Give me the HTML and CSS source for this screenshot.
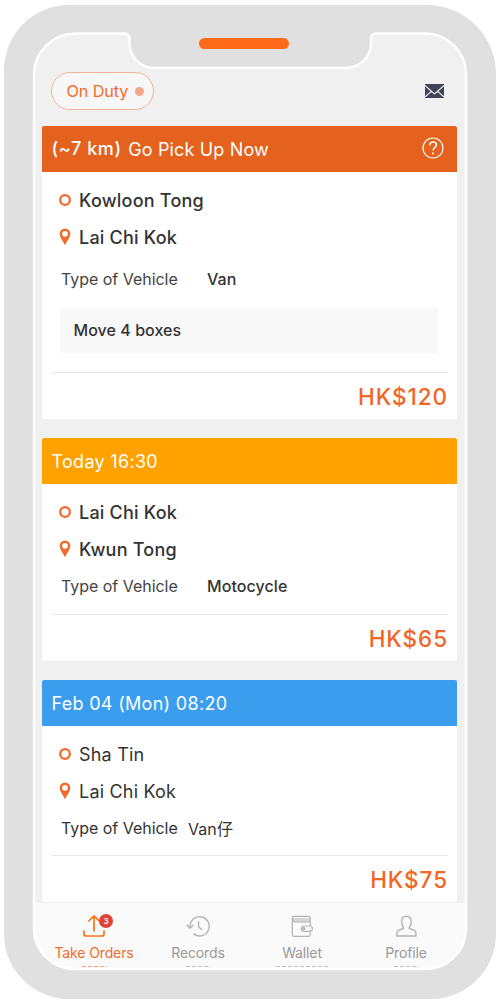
FILE: index.html
```html
<!DOCTYPE html>
<html lang="en">
<head>
<meta charset="utf-8">
<title>Take Orders</title>
<link rel="stylesheet" href="styles.css">
</head>
<body>
<svg class="defs" aria-hidden="true">
  <symbol id="circle" viewBox="0 0 12 12"><circle cx="6" cy="6" r="4.800" fill="none" stroke="#f4692a" stroke-width="2.300"/></symbol>
  <symbol id="pin" viewBox="0 0 12 18"><path fill="#f4692a" fill-rule="evenodd" d="M6 .5A5.300 5.300 0 0 0 .7 5.800C.7 9 3.500 12.500 6 17.200 8.500 12.500 11.300 9 11.300 5.800A5.300 5.300 0 0 0 6 .5ZM6 2.900a2.900 2.900 0 1 1 0 5.800a2.900 2.900 0 1 1 0-5.800Z"/></symbol>
</svg>
<div class="phone">
  <div class="screen">
    <header class="topbar">
      <div class="duty"><span class="duty-label">On Duty</span><span class="duty-dot"></span></div>
      <svg class="mail" viewBox="0 0 19 14"><rect width="19" height="14" fill="#424257"/><path d="M0 1.500 7.200 8 9.500 9.900 11.800 8 19 1.500M0 13 6.200 7.300M19 13 12.800 7.300" fill="none" stroke="#f0f0f0" stroke-width="1.100"/></svg>
    </header>
    <main class="orders">
      <article class="card">
        <div class="head red"><span class="dist">(~7 km)</span><span class="pickup">Go Pick Up Now</span>
          <svg class="help" viewBox="0 0 22 22" fill="none" stroke="#fff"><circle cx="11" cy="11" r="10" stroke-width="1.200"/><path d="M7.700 8.300C7.800 6.200 9.200 5.100 11.100 5.100S14.400 6.300 14.400 8.100C14.400 10.400 11.100 10.500 11.100 13.500" stroke-width="1.500"/><path d="M11.100 15.400v1.800" stroke-width="1.800"/></svg>
        </div>
        <div class="row"><svg class="i-circle"><use href="#circle"/></svg><span class="place">Kowloon Tong</span></div>
        <div class="row"><svg class="i-pin"><use href="#pin"/></svg><span class="place">Lai Chi Kok</span></div>
        <div class="type spaced"><span class="type-label">Type of Vehicle</span><span class="type-value">Van</span></div>
        <div class="note">Move 4 boxes</div>
        <div class="foot">HK$120</div>
      </article>
      <article class="card">
        <div class="head amber"><span class="today">Today 16:30</span></div>
        <div class="row"><svg class="i-circle"><use href="#circle"/></svg><span class="place">Lai Chi Kok</span></div>
        <div class="row"><svg class="i-pin"><use href="#pin"/></svg><span class="place">Kwun Tong</span></div>
        <div class="type"><span class="type-label">Type of Vehicle</span><span class="type-value">Motocycle</span></div>
        <div class="foot">HK$65</div>
      </article>
      <article class="card light">
        <div class="head blue"><span class="date">Feb 04 (Mon) 08:20</span></div>
        <div class="row"><svg class="i-circle"><use href="#circle"/></svg><span class="place">Sha Tin</span></div>
        <div class="row"><svg class="i-pin"><use href="#pin"/></svg><span class="place">Lai Chi Kok</span></div>
        <div class="type"><span class="type-label">Type of Vehicle</span><span class="type-value">Van仔</span></div>
        <div class="foot">HK$75</div>
      </article>
    </main>
    <nav class="tabs">
      <div class="tab active">
        <div class="icon">
          <svg viewBox="0 0 24 24" fill="none" stroke="#fb7315" stroke-width="1.700" stroke-linecap="round" stroke-linejoin="round"><path d="M12 17V1.800M6.800 7 12 1.800l5.200 5.200M2 17v3a2 2 0 0 0 2 2h16a2 2 0 0 0 2-2V17"/></svg>
          <span class="badge">3</span>
        </div>
        <span class="label">Take Orders</span><i class="edge"></i>
      </div>
      <div class="tab">
        <div class="icon">
          <svg viewBox="0 0 24 24" fill="none" stroke="#b3b3b3" stroke-width="1.400" stroke-linecap="round" stroke-linejoin="round"><path d="M4 13.800V12A9.600 9.600 0 1 1 8 20.100M1 11.300l3 2.900 3-2.900M12.600 7.800v5l3 2.800"/></svg>
        </div>
        <span class="label">Records</span><i class="edge"></i>
      </div>
      <div class="tab">
        <div class="icon">
          <svg viewBox="0 0 24 24" fill="none" stroke="#b3b3b3" stroke-width="1.200" stroke-linejoin="round"><path d="M3 4h17v4H3z" fill="#d6d6d6" stroke="none"/><path d="M20.300 12V4.500Q20.300 2.300 18.500 2.300H4Q2.300 2.300 2.300 4V20.500Q2.300 22.300 4 22.300H18.500Q20.300 22.300 20.300 20.500V17.500M2.500 5Q2.600 8 5 8H20.300M20.500 12H14a2.700 2.700 0 0 0 0 5.400h6Q22.500 16.500 22.500 14.700T20.500 12Z"/><circle cx="13.700" cy="14.700" r="1"/></svg>
        </div>
        <span class="label">Wallet</span><i class="edge wide"></i>
      </div>
      <div class="tab">
        <div class="icon">
          <svg viewBox="0 0 24 24" fill="none" stroke="#b3b3b3" stroke-width="1.400" stroke-linejoin="round"><path d="M9.400 13.200C8 11.500 7.600 9.500 7.600 7.500 7.600 4.200 9.400 2.200 12.400 2.200s4.800 2 4.800 5.300c0 2-.4 4-1.800 5.700v1.300l5 1.900c1.200.6 1.500 1.500 1.500 2.900V22H2.900v-2.700c0-1.400.3-2.300 1.500-2.900l5-1.900Z"/></svg>
        </div>
        <span class="label">Profile</span><i class="edge"></i>
      </div>
    </nav>
  </div>
  <svg class="frame" viewBox="0 0 500 1003">
    <path fill="#e0e0e0" fill-rule="evenodd" d="M4 70A65 65 0 0 1 69 5H427A69 69 0 0 1 496 74V934A65 65 0 0 1 431 999H69A65 65 0 0 1 4 934ZM34 74V929A41 40 0 0 0 75 969H425A41 40 0 0 0 466 929V75A41 41 0 0 0 425 33.500H376Q371 33.500 371 39V43A25 25 0 0 1 346 68H154A25 25 0 0 1 129.500 43V39Q129.500 33.500 124 33.500H76A42 41 0 0 0 34 74Z"/>
    <path fill="none" stroke="#fff" stroke-width="2.400" d="M34 74V929A41 40 0 0 0 75 969H425A41 40 0 0 0 466 929V75A41 41 0 0 0 425 33.500H376Q371 33.500 371 39V43A25 25 0 0 1 346 68H154A25 25 0 0 1 129.500 43V39Q129.500 33.500 124 33.500H76A42 41 0 0 0 34 74Z"/>
    <rect x="199" y="38" width="90" height="11" rx="5.500" fill="#ff6a1a"/>
  </svg>
</div>
</body>
</html>
```

FILE: styles.css
```css
* { box-sizing: border-box; }
body { margin: 0; background: #fff; font-family: Inter, "Noto Sans CJK TC", sans-serif; color: #333; }
.defs { display: block; width: 0; height: 0; }
.phone { position: relative; width: 500px; height: 1003px; padding: 34px 35px 35px; overflow: hidden; }
.frame { position: absolute; inset: 0; width: 500px; height: 1003px; }
.screen { height: 934px; background: #f0f0f0; display: flex; flex-direction: column; }
.topbar { height: 92px; flex: none; padding: 38px 21px 0 16px; display: flex; justify-content: space-between; align-items: flex-start; }
.duty { flex: none; width: 103px; height: 38px; border: 1.500px solid #f4b496; border-radius: 19px; background: #f7f7f7; display: flex; align-items: center; padding-left: 14.500px; gap: 5.500px; }
.duty-label { font-size: 16.200px; letter-spacing: -0.100px; color: #f46a2a; width: 63px; white-space: nowrap; }
.duty-dot { width: 9px; height: 9px; border-radius: 50%; background: #f2a988; }
.mail { flex: none; width: 19px; height: 14px; margin-top: 12px; }

.orders { flex: 1; min-height: 0; overflow: hidden; padding: 0 8px 0 7px; }
.card { background: #fff; border-radius: 2px; margin-bottom: 19px; overflow: hidden; }
.head { height: 46px; padding: 0 13px 0 9.500px; display: flex; align-items: center; color: #fff; font-size: 18px; white-space: nowrap; margin-bottom: 10px; }
.red { background: #e5611e; }
.amber { background: #ffa200; }
.blue { background: #3b9ded; }
.dist { font-weight: 500; letter-spacing: 0.600px; margin-right: 6.500px; padding-bottom: 2px; }
.pickup { letter-spacing: 0.150px; }
.today, .date { letter-spacing: 0.300px; padding-top: 1px; }
.help { width: 22px; height: 22px; margin-left: auto; margin-bottom: 2px; }
.row { height: 37px; display: flex; align-items: center; padding-left: 17px; }
.i-circle { width: 12px; height: 12px; margin: 0 8px 2px 0; }
.i-pin { width: 12px; height: 18px; margin: 0 8px 1px 0; }
.place { font-size: 18px; font-weight: 500; letter-spacing: 0.220px; }
.type { height: 37px; display: flex; align-items: center; padding: 0 0 2px 19px; font-size: 16px; margin-bottom: 9px; }
.spaced { margin-top: 5px; padding-bottom: 1px; }
.type-label { width: 146px; letter-spacing: -0.030px; color: #444; }
.type-value { font-weight: 500; letter-spacing: 0.080px; }
.note { height: 46px; margin: 0 19px 19px 18px; padding-left: 13.500px; border-radius: 2px; background: #f8f8f8; display: flex; align-items: center; font-size: 16px; font-weight: 500; letter-spacing: 0.050px; }
.foot { height: 47px; margin: 0 9px 0 10px; border-top: 1px solid #e6e6e6; display: flex; align-items: center; justify-content: flex-end; color: #f26625; font-size: 22.500px; font-weight: 550; letter-spacing: 0.950px; }
.light .place { font-weight: 400; letter-spacing: 0.200px; }
.light .type { margin-bottom: 8px; }
.light .type-label { width: 127px; color: #333; }
.light .type-value { font-weight: 400; }

.tabs { height: 65px; flex: none; background: #fafafa; display: flex; padding: 0 7px; overflow: hidden; }
.tab { width: 104px; flex: none; display: flex; flex-direction: column; align-items: center; padding-top: 11px; color: #999; }
.active { color: #f46a2a; }
.icon { position: relative; width: 24px; height: 24px; }
.icon svg { display: block; width: 24px; height: 24px; }
.badge { position: absolute; left: 17px; top: 0; width: 14px; height: 14px; border-radius: 50%; background: #dc4437; color: #fff; font-size: 8px; font-weight: 600; line-height: 14px; text-align: center; }
.label { font-size: 14px; line-height: 20px; margin-top: 5px; letter-spacing: -0.120px; white-space: nowrap; }
.edge { width: 25px; height: 1px; margin-top: 3px; opacity: 0.6; background: repeating-linear-gradient(90deg, currentColor 0 4px, transparent 4px 6px); }
.wide { width: 52px; }
```
